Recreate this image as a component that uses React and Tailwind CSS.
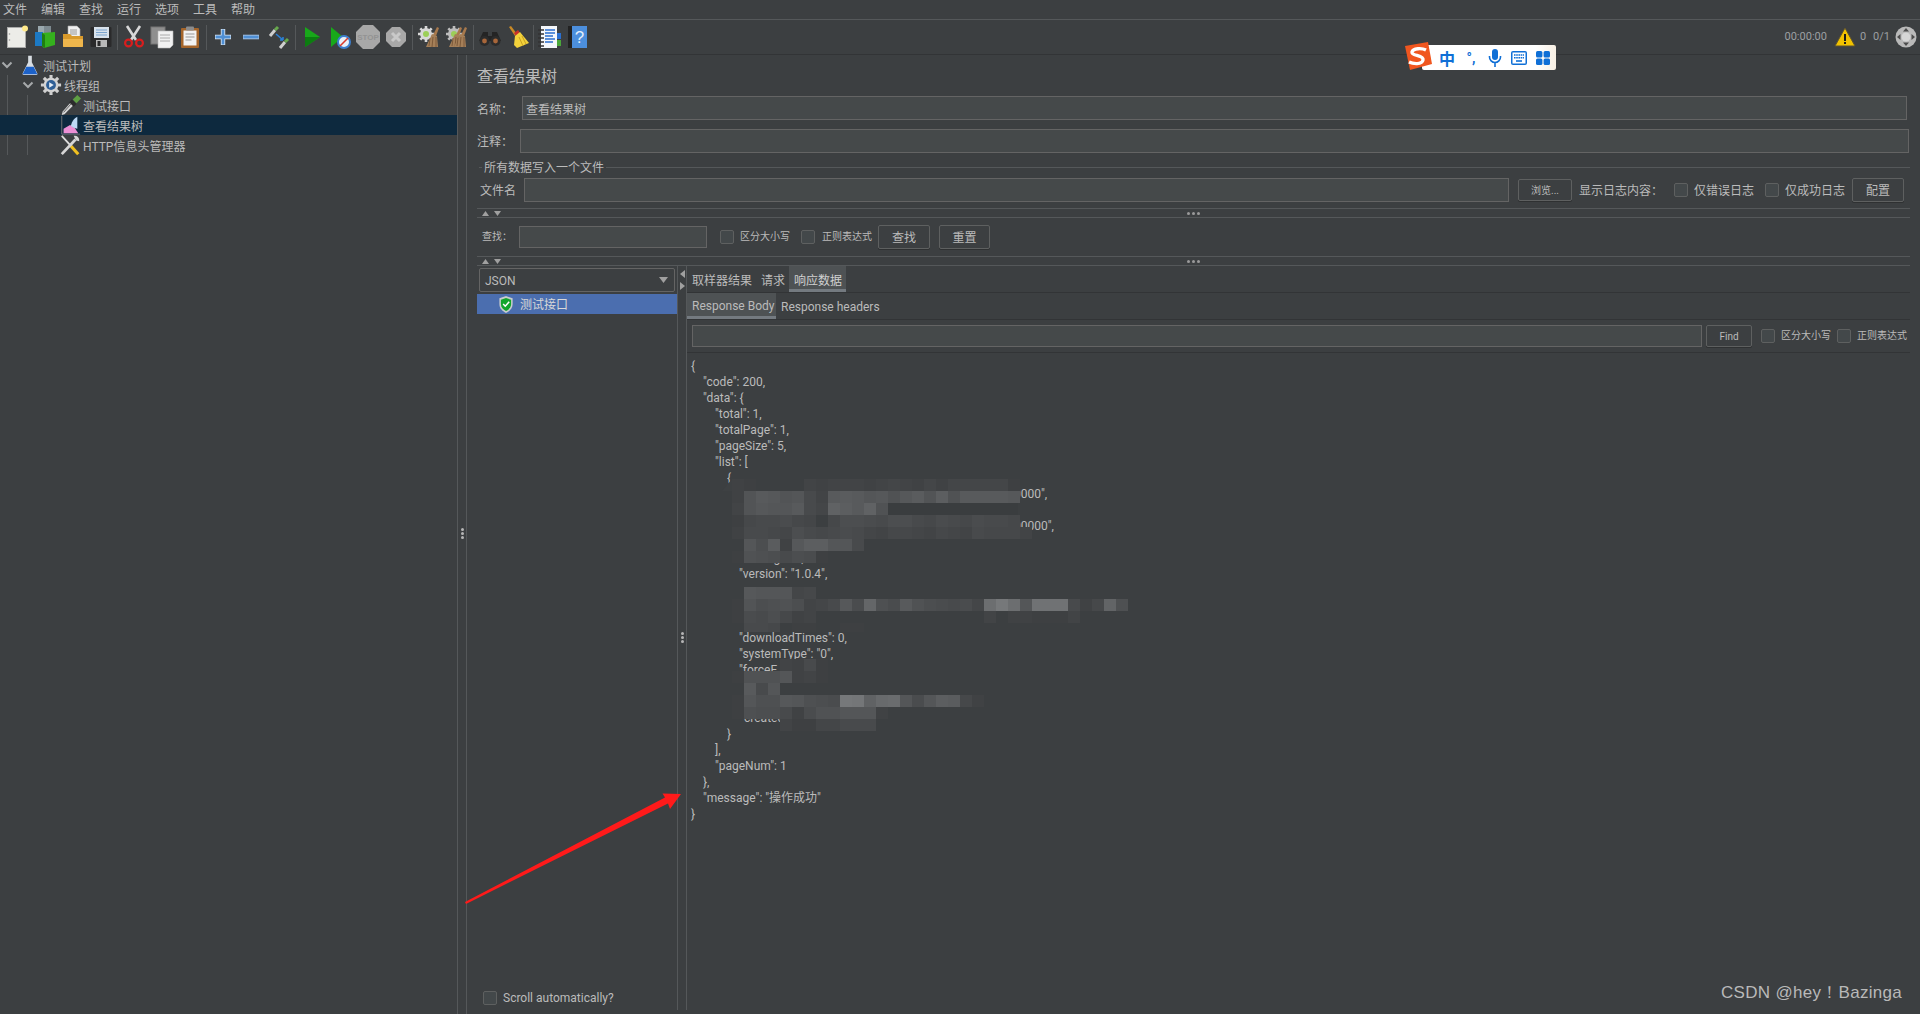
const menus = ["文件", "编辑", "查找", "运行", "选项", "工具", "帮助"];

const Sep = ({ width = "w-[5px]" }) => (
  <div className={`flex justify-center ${width}`}>
    <div className="h-[25px] w-px bg-[#55585a]" />
  </div>
);

const Tool = ({ children }) => (
  <div className="flex w-[28px] justify-center">
    <svg viewBox="0 0 24 24" className="h-[24px] w-[24px]">
      {children}
    </svg>
  </div>
);

const Gear = ({ fill = "#d8d8d8" }) => (
  <g>
    <circle cx="9" cy="9" r="6" fill={fill} />
    <path d="M9 1v16M1 9h16M3.3 3.3l11.4 11.4M14.7 3.3L3.3 14.7" stroke={fill} strokeWidth="2.6" />
    <circle cx="9" cy="9" r="3" fill="#9ccf58" />
  </g>
);

const Brush = ({ x = 0 }) => (
  <g transform={`translate(${x} 0)`}>
    <path d="M20 2l2 1-3 8-3-1z" fill="#a8794c" />
    <path d="M15 9l5 2 1 11-12 0z" fill="#a57f58" />
    <path d="M13 13l-1 8M16 12l-1 10M19 12l0 10" stroke="#7d5a3a" strokeWidth="1" />
  </g>
);

const toolbar = [
  <Tool key="new">
    <rect x="2.5" y="2.5" width="18" height="20" fill="#ecece8" stroke="#a9a9a9" />
    <circle cx="4.5" cy="9" r=".8" fill="#999" />
    <circle cx="4.5" cy="15" r=".8" fill="#999" />
    <circle cx="20" cy="3.5" r="3" fill="#ffe98a" />
  </Tool>,
  <Tool key="templates">
    <rect x="5" y="1" width="7" height="8" fill="#9aa8ae" />
    <rect x="11" y="1" width="7" height="8" fill="#7d8a90" />
    <rect x="2" y="7" width="8" height="14" fill="#1c79c4" />
    <path d="M9 8l13-1v13l-11 3-2-2z" fill="#35b11e" />
    <path d="M9 8l3 2v13l-3-2z" fill="#1f7f10" />
  </Tool>,
  <Tool key="open">
    <path d="M7 1h9l3 3v9H7z" fill="#efefef" stroke="#aaa" strokeWidth=".6" />
    <path d="M9 5h7M9 7h7M9 9h7" stroke="#999" />
    <path d="M2 9h7l2 2h11v10a1 1 0 01-1 1H3a1 1 0 01-1-1z" fill="#d99a2b" />
    <path d="M2 14h20v7a1 1 0 01-1 1H3a1 1 0 01-1-1z" fill="#efb64c" />
  </Tool>,
  <Tool key="save">
    <rect x="1.5" y="2" width="21" height="20" rx="1" fill="#2a2a2b" />
    <rect x="5" y="2" width="15" height="11" fill="#d8e2ec" />
    <path d="M7 5h11M7 7.5h11M7 10h11" stroke="#7ba4cf" />
    <rect x="7" y="15" width="11" height="7" fill="#b9b9b9" />
    <rect x="8.5" y="16" width="3" height="5" fill="#2a2a2b" />
  </Tool>,
  <Sep key="s1" />,
  <Tool key="cut">
    <path d="M5 1l9 14M18 1L9 15" stroke="#d8d8d8" strokeWidth="2.6" />
    <circle cx="6.5" cy="18" r="3.4" fill="none" stroke="#d81e1e" strokeWidth="2.2" />
    <circle cx="17.5" cy="18" r="3.4" fill="none" stroke="#d81e1e" strokeWidth="2.2" />
  </Tool>,
  <Tool key="copy">
    <rect x="1" y="2" width="14" height="17" fill="#8f8f8f" stroke="#777" />
    <path d="M8 6h15v14l-3 3H8z" fill="#f1f1f1" stroke="#bbb" strokeWidth=".6" />
    <path d="M10 10h10M10 13h10M10 16h10" stroke="#aaa" />
  </Tool>,
  <Tool key="paste">
    <rect x="3" y="3" width="18" height="20" rx="1" fill="#a5652a" />
    <rect x="5.5" y="5.5" width="13" height="15" fill="#f2f2f2" />
    <rect x="8" y="1.5" width="8" height="4" rx="1" fill="#8c8c8c" />
    <path d="M7.5 9h9M7.5 12h9M7.5 15h6" stroke="#999" />
  </Tool>,
  <Sep key="s2" />,
  <Tool key="add">
    <path d="M12 4v16M4 12h16" stroke="#dfe8f2" strokeWidth="4.4" />
    <path d="M12 4.5v15M4.5 12h15" stroke="#4f8fd4" strokeWidth="2.8" />
  </Tool>,
  <Tool key="remove">
    <path d="M4 12h16" stroke="#9fbde0" strokeWidth="4.6" />
    <path d="M4.5 12h15" stroke="#4f8fd4" strokeWidth="2.6" />
  </Tool>,
  <Tool key="toggle">
    <path d="M3 11l5-6" stroke="#cfcfcf" strokeWidth="3" />
    <path d="M8 5l3-3" stroke="#67a84d" strokeWidth="3" />
    <path d="M13 23l5-6" stroke="#cfcfcf" strokeWidth="3" />
    <path d="M18 17l3-3" stroke="#67a84d" strokeWidth="3" />
    <path d="M9 9l7 6M16 15v-3M16 15h-3" stroke="#2b7fd6" strokeWidth="1.6" fill="none" />
  </Tool>,
  <Sep key="s3" />,
  <Tool key="run">
    <path d="M5 2l15 10L5 22z" fill="#18a81a" />
    <path d="M5 12h15L5 22z" fill="#0c7d10" />
  </Tool>,
  <Tool key="runNoPause">
    <path d="M3 2l12 10-12 10z" fill="#18a81a" />
    <circle cx="16" cy="17" r="6" fill="#e8f0f8" stroke="#3b7fd0" strokeWidth="2" />
    <path d="M12 21l8-8" stroke="#d8392b" strokeWidth="1.6" />
  </Tool>,
  <Tool key="stop">
    <path d="M7 0h10l7 7v10l-7 7H7l-7-7V7z" fill="#a8a8a8" />
    <text x="12" y="15" textAnchor="middle" fontSize="8" fontWeight="700" fill="#939393" fontFamily="Liberation Sans, sans-serif">
      STOP
    </text>
  </Tool>,
  <Tool key="shutdown">
    <path d="M8 2h8l6 6v8l-6 6H8l-6-6V8z" fill="#a8a8a8" />
    <path d="M8 8l8 8M16 8l-8 8" stroke="#c9c9c9" strokeWidth="3" />
  </Tool>,
  <Sep key="s4" />,
  <Tool key="clear">
    <Gear />
    <Brush />
  </Tool>,
  <Tool key="clearAll">
    <Gear fill="#bdbdbd" />
    <Brush x="-5" />
    <Brush />
  </Tool>,
  <Sep key="s5" />,
  <Tool key="search">
    <path d="M5 7h5v4h4V7h5l4 9H1z" fill="#242424" />
    <circle cx="6.5" cy="16" r="5" fill="#2c2c2c" />
    <circle cx="17.5" cy="16" r="5" fill="#2c2c2c" />
    <circle cx="6.5" cy="16" r="2.4" fill="#a8663a" />
    <circle cx="17.5" cy="16" r="2.4" fill="#a8663a" />
  </Tool>,
  <Tool key="reset">
    <path d="M3 2l2-1 6 8-2 2z" fill="#c98a26" />
    <path d="M8 8l4-3 2 3-4 3z" fill="#c8302a" />
    <path d="M9 11l5-4 9 11-12 5-3-3z" fill="#f3d23b" />
    <path d="M13 12l4 9M16 11l4 8" stroke="#c9a020" />
  </Tool>,
  <Sep key="s6" width="w-[3px]" />,
  <Tool key="log">
    <rect x="4" y="1" width="16" height="22" fill="#f4f7fb" />
    <path d="M1 5h6M1 9h6M1 13h6M1 17h6M1 21h6" stroke="#333" strokeWidth="1.4" />
    <path d="M8 5h10M8 8h10M8 11h8M8 14h10M8 17h8" stroke="#2a6fd0" strokeWidth="1.3" />
    <rect x="20" y="8" width="4" height="6" fill="#2a6fd0" />
    <rect x="20" y="15" width="4" height="6" fill="#4aa83a" />
  </Tool>,
  <Tool key="help">
    <rect x="3" y="1" width="5" height="22" fill="#222" />
    <rect x="7" y="1" width="15" height="22" fill="#4c8fdd" />
    <text x="14.5" y="18" textAnchor="middle" fontSize="17" fill="#e4eefa" fontFamily="Liberation Sans, sans-serif">
      ?
    </text>
  </Tool>,
];

const Chevron = () => (
  <svg viewBox="0 0 14 10" className="h-[10px] w-[14px]">
    <path d="M2.5 2.5L7 7l4.5-4.5" fill="none" stroke="#a6a9ab" strokeWidth="2" />
  </svg>
);

const TreeIcon = ({ children }) => (
  <svg viewBox="0 0 24 24" className="h-[22px] w-[24px] shrink-0">
    {children}
  </svg>
);

const Flask = () => (
  <TreeIcon>
    <path d="M10 2h4v7l6 12a1.5 1.5 0 01-1 2H5a1.5 1.5 0 01-1-2l6-12z" fill="#d8dde2" />
    <path d="M8 14h8l4 8H4z" fill="#1d62c9" />
  </TreeIcon>
);

const ThreadGear = () => (
  <TreeIcon>
    <circle cx="12" cy="12" r="8" fill="#dadada" />
    <path d="M12 1v22M1 12h22M4.2 4.2l15.6 15.6M19.8 4.2L4.2 19.8" stroke="#d0d0d0" strokeWidth="3.4" />
    <circle cx="12" cy="12" r="5.4" fill="#2f5f96" />
    <path d="M10 9l5 3-5 3z" fill="#e6eef6" />
  </TreeIcon>
);

const Pipette = () => (
  <TreeIcon>
    <path d="M3 23l1-4 9-10 3 3-10 10z" fill="#d6d6d6" />
    <path d="M5 20l8-9" stroke="#555" />
    <path d="M11 9l3-3 5 5-3 3z" fill="#2b2b2b" />
    <path d="M15 6l5-5 4 4-5 5z" fill="#5fa043" />
  </TreeIcon>
);

const Graph = () => (
  <TreeIcon>
    <path d="M3 2v20h20" stroke="#777" fill="none" />
    <path d="M5 21v-5l7-4 5 3 4 6z" fill="#eb8fd4" />
    <path d="M13 13c1-6 5-9 7-10v13l-4-1z" fill="#bcd8f4" />
  </TreeIcon>
);

const Tools = () => (
  <TreeIcon>
    <path d="M3 2l11 12" stroke="#ddd" strokeWidth="2" />
    <path d="M13 13l8 9" stroke="#f0c020" strokeWidth="3.4" />
    <path d="M3 22L18 6" stroke="#d6d6d6" strokeWidth="3" />
    <path d="M16 2a5 5 0 016 6l-3-1-1-1z" fill="#d6d6d6" />
  </TreeIcon>
);

const tree = [
  { label: "测试计划", pad: "pl-0", chevron: true, icon: <Flask /> },
  { label: "线程组", pad: "pl-[21px]", chevron: true, icon: <ThreadGear /> },
  { label: "测试接口", pad: "pl-[58px]", icon: <Pipette /> },
  { label: "查看结果树", pad: "pl-[58px]", icon: <Graph />, selected: true },
  { label: "HTTP信息头管理器", pad: "pl-[58px]", icon: <Tools /> },
];

const Field = ({ children, className = "" }) => (
  <div className={`flex items-center border border-[#646464] bg-[#45494a] pl-[3px] pt-[3px] text-xs ${className}`}>{children}</div>
);

const Check = () => <div className="h-[14px] w-[14px] shrink-0 rounded-[2px] border border-[#5e6060] bg-[#43484a]" />;

const Btn = ({ children, className = "" }) => (
  <div className={`flex shrink-0 items-center justify-center rounded-[2px] border border-[#5e6060] bg-[#3c3f41] pt-[1px] shadow-[0_1px_0_#2f3132] ${className}`}>
    {children}
  </div>
);

const Dots3 = () => (
  <div className="flex gap-[2px]">
    <div className="h-[3px] w-[3px] rounded-full bg-[#9a9a9a]" />
    <div className="h-[3px] w-[3px] rounded-full bg-[#9a9a9a]" />
    <div className="h-[3px] w-[3px] rounded-full bg-[#9a9a9a]" />
  </div>
);

const DotsV = () => (
  <div className="flex flex-col gap-[1px]">
    <div className="h-[3px] w-[3px] rounded-full bg-[#b5b5b5]" />
    <div className="h-[3px] w-[3px] rounded-full bg-[#b5b5b5]" />
    <div className="h-[3px] w-[3px] rounded-full bg-[#b5b5b5]" />
  </div>
);

const HSplit = () => (
  <div className="grid h-[10px] grid-cols-3 items-center border-y border-[#55585a]">
    <div className="flex gap-[5px] pl-[5px]">
      <svg viewBox="0 0 7 5" className="h-[5px] w-[7px]">
        <path d="M3.5 0L7 5H0z" fill="#a0a0a0" />
      </svg>
      <svg viewBox="0 0 7 5" className="h-[5px] w-[7px]">
        <path d="M0 0h7L3.5 5z" fill="#a0a0a0" />
      </svg>
    </div>
    <div className="flex justify-center">
      <Dots3 />
    </div>
  </div>
);

// x/y are page coordinates, v is the grey level of each 12px block
const mosaic = [
  { y: 479, v: [64, 62, 60, 60, 60, 60, 66, 64, 66, 66, 66, 64, 66, 68, 66, 64, 68, 64, 68, 68, 68, 68, 68, 62] },
  { y: 491, v: [64, 82, 88, 86, 82, 84, 72, 66, 88, 90, 88, 84, 86, 80, 86, 90, 82, 92, 80, 88, 88, 88, 88, 86] },
  { y: 503, v: [66, 82, 86, 84, 84, 88, 72, 68, 96, 92, 88, 96, 80] },
  { y: 515, v: [62, 70, 72, 72, 74, 70, 68, 60, 70, 76, 76, 74, 72, 76, 76, 72, 70, 74, 72, 70, 74, 72, 72, 70] },
  { y: 527, v: [64, 72, 72, 70, 68, 76, 72, 70, 72, 74, 72, 68, 66, 70, 70, 68, 66, 70, 68, 66, 72, 70, 70, 70, 66] },
  { y: 539, v: [60, 84, 76, 90, 64, 86, 92, 92, 84, 84, 72] },
  { y: 551, v: [62, 80, 78, 76, 72, 76, 74, 62] },
  { y: 587, v: [60, 86, 84, 84, 84, 68, 70] },
  { y: 599, v: [62, 82, 76, 78, 80, 76, 66, 68, 72, 86, 74, 100, 78, 74, 88, 80, 76, 74, 72, 74, 68, 108, 118, 108, 84, 112, 112, 112, 72, 64, 70, 98, 78] },
  { y: 611, v: [62, 74, 72, 76, 70, 64, 66, 60, 60, 60, 60, 60, 60, 60, 60, 60, 60, 60, 60, 60, 60, 66, 60, 64, 64, 62, 62, 62, 66] },
  { y: 623, h: 9, v: [60, 72, 72, 70, 60, 62, 62, 60, 60, 62, 62] },
  { y: 659, v: [60, 60, 60, 60, 66, 64, 72, 62] },
  { y: 671, v: [62, 80, 80, 80, 84, 64, 66, 62] },
  { y: 683, v: [60, 88, 72, 84] },
  { y: 695, v: [62, 84, 78, 78, 86, 84, 78, 76, 74, 118, 116, 96, 104, 106, 84, 74, 84, 92, 90, 70, 64] },
  { y: 707, v: [62, 78, 76, 76, 72, 64, 74, 80, 80, 84, 84, 84, 64] },
  { y: 719, v: [60, 60, 60, 60, 66, 62, 62, 68, 68, 72, 72, 72] },
];

const jsonLines = [
  ["pl-0", "{"],
  ["pl-[12px]", '"code": 200,'],
  ["pl-[12px]", '"data": {'],
  ["pl-[24px]", '"total": 1,'],
  ["pl-[24px]", '"totalPage": 1,'],
  ["pl-[24px]", '"pageSize": 5,'],
  ["pl-[24px]", '"list": ['],
  ["pl-[36px]", "{"],
  ["pl-[323px]", '0000",'],
  ["pl-[196px]", ","],
  ["pl-[323px]", '00000",'],
  ["pl-[49px]", ""],
  ["pl-[53px]", "adding       ,"],
  ["pl-[48px]", '"version": "1.0.4",'],
  ["pl-[49px]", ""],
  ["pl-[49px]", ""],
  ["pl-[49px]", ""],
  ["pl-[48px]", '"downloadTimes": 0,'],
  ["pl-[48px]", '"systemType": "0",'],
  ["pl-[48px]", '"forceF'],
  ["pl-[49px]", ""],
  ["pl-[49px]", ""],
  ["pl-[53px]", "created"],
  ["pl-[36px]", "}"],
  ["pl-[24px]", "],"],
  ["pl-[24px]", '"pageNum": 1'],
  ["pl-[12px]", "},"],
  ["pl-[12px]", '"message": "操作成功"'],
  ["pl-0", "}"],
];

const ShieldOk = () => (
  <svg viewBox="0 0 16 18" className="h-[17px] w-[16px]">
    <path d="M8 0l7 2.5v6C15 13 12 16 8 18 4 16 1 13 1 8.5v-6z" fill="#c9ccce" />
    <path d="M8 2l5.4 2v4.6C13.4 12 11 14.4 8 16c-3-1.6-5.4-4-5.4-7.4V4z" fill="#12a52c" />
    <path d="M5 8.5l2.2 2.3L11.4 6" fill="none" stroke="#fff" strokeWidth="1.6" />
  </svg>
);

export default function App() {
  return (
    <div className="relative flex h-[1014px] w-[1920px] flex-col overflow-hidden bg-[#3c3f41] text-[#bbbbbb] [font-family:'Roboto','Noto_Sans_CJK_SC',sans-serif]">
      {/* Menu */}
      <div className="flex h-[20px] items-center gap-[14px] border-b border-[#55585a] pl-[3px] text-xs">
        {menus.map((m) => (
          <span key={m}>{m}</span>
        ))}
      </div>

      {/* Toolbar */}
      <div className="flex h-[35px] items-center justify-between border-b border-[#323436] pl-[3px]">
        <div className="flex items-center">{toolbar}</div>
        <div className="flex items-center pr-[3px] text-[11px] text-[#9c9fa1]">
          <span>00:00:00</span>
          <svg viewBox="0 0 22 20" className="ml-[7px] h-[20px] w-[22px]">
            <path d="M11 1l10 18H1z" fill="#f2c200" stroke="#5d5330" />
            <path d="M10 7h2v7h-2zM10 15h2v2h-2z" fill="#1c1c1c" />
          </svg>
          <span className="ml-[4px]">0</span>
          <span className="ml-[7px]">0/1</span>
          <svg viewBox="0 0 22 22" className="ml-[5px] h-[22px] w-[22px]">
            <circle cx="11" cy="11" r="10.5" fill="#b9b9b9" />
            <circle cx="11" cy="11" r="4.5" fill="#d6d6d6" />
            <path d="M11 2l3 3.5H8zM11 20l3-3.5H8zM2 11l3.5-3v6zM20 11l-3.5-3v6z" fill="#4d4d4d" />
          </svg>
        </div>
      </div>

      <div className="flex min-h-0 flex-1">
        {/* Tree */}
        <div className="relative w-[457px] shrink-0">
          <div className="absolute left-[7px] top-[20px] h-[80px] w-px bg-[#55585a]" />
          <div className="absolute left-[27px] top-[40px] h-[60px] w-px bg-[#55585a]" />
          {tree.map((row) => (
            <div key={row.label} className={`relative flex h-[20px] items-center text-xs ${row.pad} ${row.selected ? "bg-[#0d293e]" : ""}`}>
              {row.chevron && (
                <div className="mr-[4px]">
                  <Chevron />
                </div>
              )}
              {row.icon}
              <span className="ml-[1px] pt-[4px]">{row.label}</span>
            </div>
          ))}
        </div>

        {/* Main splitter */}
        <div className="flex w-[10px] shrink-0 flex-col items-center border-x border-[#55585a] pt-[473px]">
          <DotsV />
        </div>

        {/* Right panel */}
        <div className="flex min-w-0 flex-1 flex-col pl-[10px] pr-[10px] text-xs">
          <div className="mt-[10px] flex h-[22px] items-center pt-[2px] text-base">查看结果树</div>

          <div className="mt-[9px] flex h-[24px] items-center">
            <span className="w-[45px] shrink-0 pt-[3px]">名称：</span>
            <Field className="mr-[3px] h-full flex-1">查看结果树</Field>
          </div>
          <div className="mt-[9px] flex h-[24px] items-center">
            <span className="w-[43px] shrink-0 pt-[2px]">注释：</span>
            <Field className="mr-[1px] h-full flex-1" />
          </div>

          <div className="mt-[6px] flex h-[16px] items-center pl-[2px]">
            <div className="h-px w-[3px] bg-[#55585a]" />
            <span className="px-[2px] pt-[1px]">所有数据写入一个文件</span>
            <div className="h-px flex-1 bg-[#55585a]" />
          </div>

          <div className="mt-[3px] flex h-[24px] items-center pr-[6px]">
            <span className="w-[47px] shrink-0 pl-[3px] pt-[2px]">文件名</span>
            <Field className="h-full flex-1" />
            <Btn className="ml-[9px] h-[22px] w-[54px] text-[10px]">浏览...</Btn>
            <span className="ml-[7px] w-[78px] shrink-0 whitespace-nowrap pt-[1px]">显示日志内容：</span>
            <div className="ml-[17px]">
              <Check />
            </div>
            <span className="ml-[6px] w-[60px] shrink-0 pt-[1px]">仅错误日志</span>
            <div className="ml-[11px]">
              <Check />
            </div>
            <span className="ml-[6px] w-[60px] shrink-0 pt-[1px]">仅成功日志</span>
            <Btn className="ml-[7px] h-[24px] w-[52px]">配置</Btn>
          </div>

          <div className="mt-[6px]">
            <HSplit />
          </div>

          <div className="flex h-[38px] items-center">
            <span className="w-[42px] shrink-0 pl-[5px] text-[10px]">查找：</span>
            <Field className="h-[22px] w-[188px]" />
            <div className="ml-[13px]">
              <Check />
            </div>
            <span className="ml-[6px] w-[50px] shrink-0 text-[10px]">区分大小写</span>
            <div className="ml-[11px]">
              <Check />
            </div>
            <span className="ml-[7px] w-[50px] shrink-0 text-[10px]">正则表达式</span>
            <Btn className="ml-[6px] h-[24px] w-[52px]">查找</Btn>
            <Btn className="ml-[9px] h-[24px] w-[51px]">重置</Btn>
          </div>

          <HSplit />

          <div className="mb-[4px] flex min-h-0 flex-1">
            {/* Sampler list */}
            <div className="flex w-[200px] shrink-0 flex-col pb-[4px]">
              <div className="mx-[2px] mt-[2px] flex h-[24px] items-center justify-between rounded-[2px] border border-[#646464] bg-[#3c3f41] pl-[5px] pr-[6px]">
                <span className="pt-[1px]">JSON</span>
                <svg viewBox="0 0 9 6" className="h-[6px] w-[9px]">
                  <path d="M0 0h9L4.5 6z" fill="#a0a0a0" />
                </svg>
              </div>
              <div className="mt-[2px] flex h-[20px] items-center bg-[#4b6eaf] pl-[21px] text-[#d8d8d8]">
                <ShieldOk />
                <span className="ml-[6px] pt-[1px]">测试接口</span>
              </div>
              <div className="flex-1" />
              <div className="flex items-center gap-[6px] pl-[6px]">
                <Check />
                <span className="pt-[1px]">Scroll automatically?</span>
              </div>
            </div>

            {/* Inner splitter */}
            <div className="flex w-[10px] shrink-0 flex-col items-center gap-[4px] border-x border-[#55585a] pt-[4px]">
              <svg viewBox="0 0 5 8" className="h-[8px] w-[5px]">
                <path d="M5 0v8L0 4z" fill="#a0a0a0" />
              </svg>
              <svg viewBox="0 0 5 8" className="h-[8px] w-[5px]">
                <path d="M0 0v8l5-4z" fill="#a0a0a0" />
              </svg>
              <div className="mt-[338px]">
                <DotsV />
              </div>
            </div>

            {/* Result tabs */}
            <div className="flex min-w-0 flex-1 flex-col">
              <div className="flex h-[27px] items-stretch border-b border-[#323436] pl-[5px]">
                <span className="flex items-center pt-[4px]">取样器结果</span>
                <span className="ml-[9px] flex items-center pt-[4px]">请求</span>
                <span className="ml-[4px] flex w-[57px] items-center border-b-[3px] border-[#747a80] bg-[#4e5254] pl-[5px] pt-[6px] text-[#d0d0d0]">响应数据</span>
              </div>
              <div className="flex h-[27px] items-stretch border-b border-[#323436]">
                <span className="flex w-[89px] items-center whitespace-nowrap border-b-[3px] border-[#747a80] bg-[#4e5254] pl-[5px] pt-[3px]">Response Body</span>
                <span className="ml-[5px] flex items-center pt-[1px]">Response headers</span>
              </div>
              <div className="flex h-[33px] items-center border-b border-[#323436] pl-[5px] pr-[3px]">
                <Field className="h-[22px] flex-1" />
                <Btn className="ml-[4px] h-[22px] w-[46px] text-[10px]">Find</Btn>
                <div className="ml-[9px]">
                  <Check />
                </div>
                <span className="ml-[6px] w-[50px] shrink-0 text-[10px]">区分大小写</span>
                <div className="ml-[6px]">
                  <Check />
                </div>
                <span className="ml-[6px] w-[50px] shrink-0 text-[10px]">正则表达式</span>
              </div>
              <div className="pl-[4px] pt-[5px]">
                {jsonLines.map(([pad, text], i) => (
                  <div key={i} className={`h-[16px] whitespace-pre leading-[16px] ${pad}`}>
                    {text}
                  </div>
                ))}
              </div>
            </div>
          </div>
        </div>
      </div>

      {/* Pixelated blur and red annotation arrow pasted over the screenshot */}
      <svg viewBox="0 0 1920 1014" className="pointer-events-none absolute inset-0 h-[1014px] w-[1920px]">
        <path d="M722 491l10-12v12z" fill="rgb(62,65,67)" />
        {mosaic.map((row) =>
          row.v.map((g, i) =>
            g === 60 ? null : <rect key={`${row.y}-${i}`} x={732 + i * 12} y={row.y} width="12" height={row.h || 12} fill={`rgb(${g},${g + 2},${g + 4})`} />
          )
        )}
        <rect x="888" y="503" width="130" height="12" fill="#3a3d3f" />
        <path d="M465 902L665 797.5l-2.5-4 18.5.5-11 15-2-5.5L466 904z" fill="#ff1a1a" />
      </svg>

      {/* IME status bar */}
      <div className="absolute left-[1422px] top-[45px] flex h-[25px] w-[134px] items-center rounded-[2px] bg-gradient-to-r from-white from-85% to-[#f8f0e4] pl-[13px] text-[#0f6fd6]">
        <span className="flex w-[24px] justify-center text-base font-bold [font-family:'Noto_Sans_CJK_SC',sans-serif]">中</span>
        <span className="flex w-[24px] justify-center text-sm font-bold">°,</span>
        <svg viewBox="0 0 14 20" className="ml-[5px] h-[20px] w-[14px]">
          <rect x="4" y="1" width="6" height="11" rx="3" fill="#0f6fd6" />
          <path d="M1.5 8v1a5.5 5.5 0 0011 0V8M7 15v4" fill="none" stroke="#0f6fd6" strokeWidth="1.6" />
        </svg>
        <svg viewBox="0 0 16 14" className="ml-[9px] h-[14px] w-[16px]">
          <rect x="0" y="0" width="16" height="14" rx="2" fill="#0f6fd6" />
          <rect x="1.5" y="1.5" width="13" height="11" fill="#fff" />
          <path d="M3 4h10M3 6.8h10" stroke="#0f6fd6" strokeWidth="1.6" strokeDasharray="1.6 .6" />
          <path d="M5 10h6" stroke="#0f6fd6" strokeWidth="1.6" />
        </svg>
        <svg viewBox="0 0 14 14" className="ml-[9px] h-[14px] w-[14px]">
          <rect width="6.4" height="6.4" rx="1.5" fill="#0f6fd6" />
          <rect x="7.6" width="6.4" height="6.4" rx="1.5" fill="#0f6fd6" />
          <rect y="7.6" width="6.4" height="6.4" rx="1.5" fill="#0f6fd6" />
          <rect x="7.6" y="7.6" width="6.4" height="6.4" rx="1.5" fill="#0f6fd6" />
        </svg>
      </div>
      <svg viewBox="0 0 30 30" className="absolute left-[1403px] top-[41px] h-[30px] w-[30px]">
        <path d="M2 5l23-4 4 22-22 6z" fill="#f0561f" />
        <path d="M23 9c-4-2-13-2-14 2s12 3 11 8-10 4-14 2" fill="none" stroke="#fff" strokeWidth="3.4" />
      </svg>

      {/* Watermark */}
      <div className="absolute left-[1721px] top-[982px] text-[17px] leading-[22px] tracking-[0.3px] text-[#b9b9b9] [font-family:'Liberation_Sans',sans-serif]">
        CSDN @hey！Bazinga
      </div>
    </div>
  );
}
